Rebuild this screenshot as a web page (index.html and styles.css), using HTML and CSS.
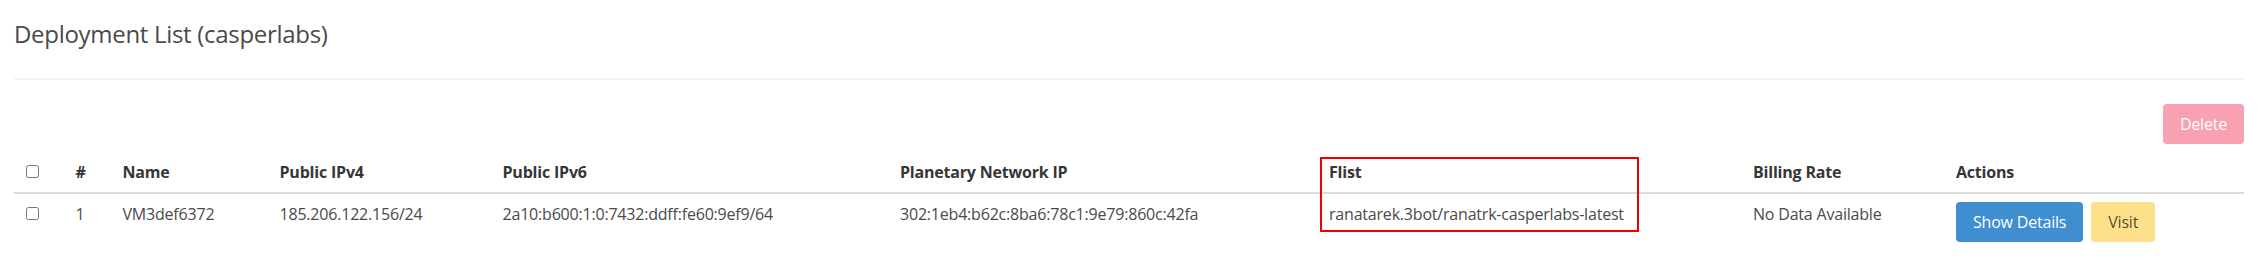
FILE: index.html
```html
<!DOCTYPE html>
<html lang="en">
<head>
<meta charset="utf-8">
<title>Deployment List (casperlabs)</title>
<link rel="stylesheet" href="styles.css">
</head>
<body>
<div class="page">
  <h1 class="title">Deployment List (casperlabs)</h1>
  <hr class="divider">
  <div class="toolbar">
    <button class="button is-danger" disabled>Delete</button>
  </div>
  <div class="table-wrap">
    <table class="table">
      <colgroup>
        <col class="c-check">
        <col class="c-num">
        <col class="c-name">
        <col class="c-ipv4">
        <col class="c-ipv6">
        <col class="c-planet">
        <col class="c-flist">
        <col class="c-billing">
        <col class="c-actions">
      </colgroup>
      <thead>
        <tr>
          <th><input type="checkbox" class="check"></th>
          <th>#</th>
          <th>Name</th>
          <th>Public IPv4</th>
          <th>Public IPv6</th>
          <th>Planetary Network IP</th>
          <th>Flist</th>
          <th>Billing Rate</th>
          <th>Actions</th>
        </tr>
      </thead>
      <tbody>
        <tr>
          <td><input type="checkbox" class="check"></td>
          <td>1</td>
          <td>VM3def6372</td>
          <td>185.206.122.156/24</td>
          <td>2a10:b600:1:0:7432:ddff:fe60:9ef9/64</td>
          <td>302:1eb4:b62c:8ba6:78c1:9e79:860c:42fa</td>
          <td>ranatarek.3bot/ranatrk-casperlabs-latest</td>
          <td>No Data Available</td>
          <td class="actions">
            <button class="button is-info">Show Details</button><button class="button is-warning">Visit</button>
          </td>
        </tr>
      </tbody>
    </table>
    <div class="highlight"></div>
  </div>
</div>
</body>
</html>
```
FILE: styles.css
```css
html, body {
  margin: 0;
  padding: 0;
  background: #ffffff;
}

body {
  font-family: "Open Sans", "Noto Sans", "Liberation Sans", sans-serif;
  font-size: 16px;
  line-height: 1.5;
  letter-spacing: -0.2px;
  color: #4a4a4a;
}

.page {
  padding: 0 18px 0 14px;
}

.title {
  margin: 18px 0 0;
  font-size: 24px;
  line-height: 32px;
  font-weight: 400;
  letter-spacing: -0.3px;
  color: #4a4a4a;
}

.divider {
  margin: 28px 0 0;
  height: 2px;
  border: 0;
  background: #f5f5f5;
}

.toolbar {
  display: flex;
  justify-content: flex-end;
  margin-top: 24px;
}

.button {
  font-family: inherit;
  font-size: 16px;
  line-height: 1.5;
  letter-spacing: -0.2px;
  height: 40px;
  padding: 7px 16px;
  border: 1px solid transparent;
  border-radius: 4px;
  cursor: pointer;
  box-sizing: border-box;
  white-space: nowrap;
}

.button.is-danger {
  background: #f14668;
  color: #ffffff;
}

.button[disabled] {
  opacity: 0.5;
  cursor: not-allowed;
}

.button.is-info {
  background: #3e8ed0;
  color: #ffffff;
  margin-right: 8px;
}

.button.is-warning {
  background: #ffe08a;
  color: rgba(0, 0, 0, 0.7);
}

.table-wrap {
  position: relative;
  margin-top: 8px;
}

.table {
  width: 100%;
  table-layout: fixed;
  border-collapse: collapse;
  border-spacing: 0;
}

.c-check { width: 49.5px; }
.c-num { width: 47px; }
.c-name { width: 157px; }
.c-ipv4 { width: 223px; }
.c-ipv6 { width: 397.5px; }
.c-planet { width: 429px; }
.c-flist { width: 424px; }
.c-billing { width: 203px; }
.c-actions { width: 300px; }

.table th,
.table td {
  padding: 8px 12px;
  text-align: left;
  vertical-align: top;
  white-space: nowrap;
}

.table th {
  color: #363636;
  font-weight: 700;
  border-bottom: 2px solid #dbdbdb;
}

.table td {
  color: #4a4a4a;
}

.check {
  margin: 0;
  width: 13px;
  height: 13px;
  vertical-align: baseline;
}

.highlight {
  position: absolute;
  left: 1306px;
  top: 5px;
  width: 319px;
  height: 75px;
  border: 2px solid #ee0000;
  box-sizing: border-box;
  pointer-events: none;
}
```
